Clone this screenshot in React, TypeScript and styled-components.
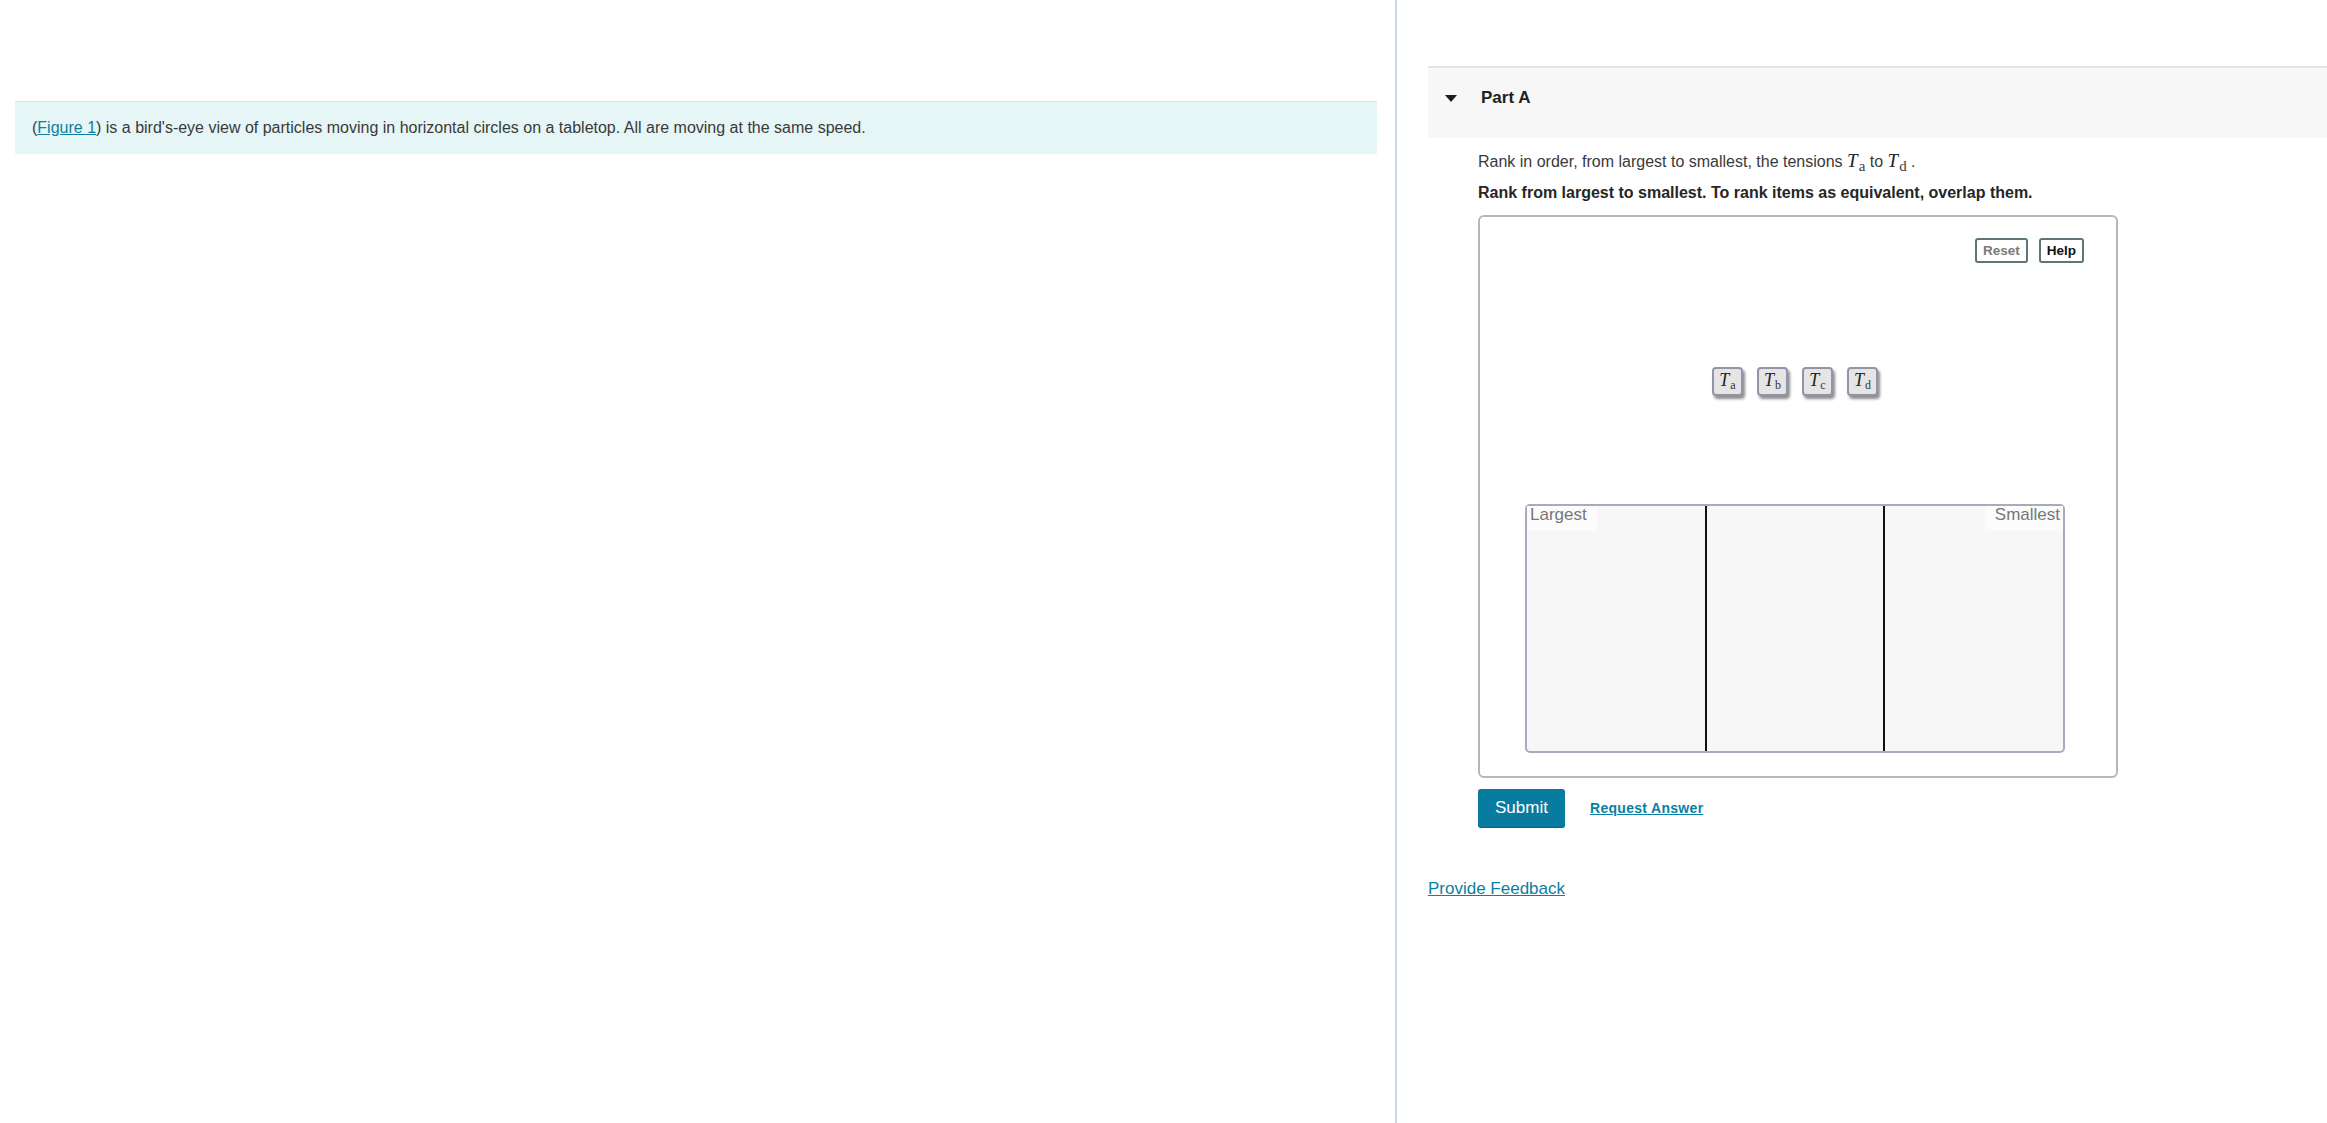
import React from "react";
import styled, { createGlobalStyle } from "styled-components";

const Global = createGlobalStyle`
  html, body { margin: 0; padding: 0; background: #ffffff; }
  body { font-family: "Liberation Sans", Arial, sans-serif; color: #333333; }
`;

const Page = styled.div`
  display: flex;
  width: 2327px;
  min-height: 1123px;
`;

const LeftPane = styled.div`
  flex: none;
  width: 1395px;
  box-sizing: border-box;
  padding: 101px 18px 0 15px;
`;

const Banner = styled.div`
  height: 53px;
  box-sizing: border-box;
  border-top: 1px solid #d9e3e4;
  background: #e6f5f6;
  display: flex;
  align-items: center;
  padding-left: 17px;
  font-size: 16px;
  color: #3a3a3a;
`;

const Link = styled.a<{ $size?: number; $bold?: boolean }>`
  color: #0a7fa3;
  text-decoration: underline;
  font-size: ${(p) => p.$size ?? 16}px;
  font-weight: ${(p) => (p.$bold ? 700 : 400)};
  cursor: pointer;
`;

const Divider = styled.div`
  flex: none;
  width: 2px;
  background: #c8d7e6;
`;

const RightPane = styled.div`
  flex: 1;
  padding: 66px 0 0 31px;
  display: flex;
  flex-direction: column;
`;

const PartHeader = styled.div`
  height: 72px;
  box-sizing: border-box;
  border-top: 2px solid #e4e4e4;
  background: #f7f7f7;
  padding: 20px 0 0 17px;
  display: flex;
  align-items: flex-start;
`;

const HeaderRow = styled.div`
  height: 20px;
  display: flex;
  align-items: center;
`;

const Caret = styled.span`
  width: 0;
  height: 0;
  border-left: 6px solid transparent;
  border-right: 6px solid transparent;
  border-top: 7px solid #1e1e1e;
`;

const PartTitle = styled.h2`
  margin: 0 0 0 24px;
  font-size: 17px;
  line-height: 20px;
  font-weight: 700;
  color: #222222;
`;

const PartBody = styled.div`
  padding-left: 50px;
  display: flex;
  flex-direction: column;
  align-items: flex-start;
`;

const Prompt = styled.p`
  margin: 12px 0 0;
  font-size: 16px;
  line-height: 22px;
  color: #3a3a3a;
`;

const Instruction = styled.p`
  margin: 9px 0 0;
  font-size: 16px;
  line-height: 22px;
  font-weight: 700;
  color: #262626;
`;

const MathVar = styled.span<{ $size: number }>`
  font-family: "Liberation Serif", "DejaVu Serif", serif;
  font-style: italic;
  font-size: ${(p) => p.$size}px;
  color: #222;
`;

const MathSub = styled.sub<{ $size: number }>`
  font-family: "Liberation Serif", "DejaVu Serif", serif;
  font-style: normal;
  font-size: ${(p) => p.$size}px;
  vertical-align: -0.25em;
  line-height: 0;
  margin-left: 1px;
`;

const RankBox = styled.div`
  margin-top: 11px;
  width: 640px;
  height: 563px;
  box-sizing: border-box;
  border: 2px solid #b7b7b7;
  border-radius: 6px;
  display: flex;
  flex-direction: column;
`;

const Toolbar = styled.div`
  display: flex;
  justify-content: flex-end;
  gap: 11px;
  padding: 21px 32px 0 0;
`;

const ToolButton = styled.button<{ $muted?: boolean }>`
  height: 25px;
  box-sizing: border-box;
  padding: 0 6px;
  border: 2px solid #5d7479;
  border-radius: 3px;
  background: #ffffff;
  font-family: "Liberation Sans", Arial, sans-serif;
  font-size: 13.5px;
  font-weight: 700;
  color: ${(p) => (p.$muted ? "#7a7a7a" : "#111111")};
`;

const TileRow = styled.div`
  margin-top: 104px;
  display: flex;
  justify-content: center;
  gap: 14px;
  padding-right: 6px;
`;

const Tile = styled.div`
  width: 31px;
  height: 29px;
  box-sizing: border-box;
  border: 2px solid #9394a8;
  border-radius: 4px;
  background: #e5e5e5;
  box-shadow: 2px 3px 3px rgba(0, 0, 0, 0.45);
  display: flex;
  align-items: center;
  justify-content: center;
  line-height: 1;
  padding-bottom: 3px;
`;

const RankArea = styled.div`
  margin: 108px 0 0 45px;
  width: 540px;
  height: 249px;
  box-sizing: border-box;
  border: 2px solid #aaaabd;
  border-radius: 5px;
  background: #f7f7f7;
  display: grid;
  grid-template-columns: 178px 178px 1fr;
`;

const RankColumn = styled.div<{ $first?: boolean; $align: "flex-start" | "flex-end" }>`
  border-left: ${(p) => (p.$first ? "none" : "2px solid #111111")};
  display: flex;
  justify-content: ${(p) => p.$align};
  align-items: flex-start;
`;

const ColumnLabel = styled.span<{ $right?: boolean }>`
  height: 25px;
  padding: ${(p) => (p.$right ? "0 3px 0 10px" : "0 10px 0 3px")};
  background: #fcfcfc;
  font-size: 17px;
  line-height: 17px;
  color: #777777;
`;

const Actions = styled.div`
  margin-top: 11px;
  display: flex;
  align-items: center;
`;

const SubmitButton = styled.button`
  width: 87px;
  height: 38px;
  border: none;
  border-radius: 3px;
  background: #077ca0;
  box-shadow: 0 1px 0 #05607c;
  color: #ffffff;
  font-family: "Liberation Sans", Arial, sans-serif;
  font-size: 17px;
`;

const RequestLink = styled(Link)`
  margin-left: 25px;
  letter-spacing: 0.3px;
`;

const Feedback = styled.div`
  margin-top: 52px;
  line-height: 20px;
`;

function T({ sub, size, subSize }: { sub: string; size: number; subSize: number }) {
  return (
    <span>
      <MathVar $size={size}>T</MathVar>
      <MathSub $size={subSize}>{sub}</MathSub>
    </span>
  );
}

export default function App() {
  return (
    <>
      <Global />
      <Page>
        <LeftPane>
          <Banner>
            <span>
              (<Link>Figure 1</Link>) is a bird's-eye view of particles moving in horizontal circles on a
              tabletop. All are moving at the same speed.
            </span>
          </Banner>
        </LeftPane>
        <Divider />
        <RightPane>
          <PartHeader>
            <HeaderRow>
              <Caret />
              <PartTitle>Part A</PartTitle>
            </HeaderRow>
          </PartHeader>
          <PartBody>
            <Prompt>
              Rank in order, from largest to smallest, the tensions <T sub="a" size={19} subSize={15} /> to{" "}
              <T sub="d" size={19} subSize={15} /> .
            </Prompt>
            <Instruction>Rank from largest to smallest. To rank items as equivalent, overlap them.</Instruction>
            <RankBox>
              <Toolbar>
                <ToolButton $muted>Reset</ToolButton>
                <ToolButton>Help</ToolButton>
              </Toolbar>
              <TileRow>
                {["a", "b", "c", "d"].map((s) => (
                  <Tile key={s}>
                    <T sub={s} size={18} subSize={12} />
                  </Tile>
                ))}
              </TileRow>
              <RankArea>
                <RankColumn $first $align="flex-start">
                  <ColumnLabel>Largest</ColumnLabel>
                </RankColumn>
                <RankColumn $align="flex-start" />
                <RankColumn $align="flex-end">
                  <ColumnLabel $right>Smallest</ColumnLabel>
                </RankColumn>
              </RankArea>
            </RankBox>
            <Actions>
              <SubmitButton>Submit</SubmitButton>
              <RequestLink $size={14} $bold>
                Request Answer
              </RequestLink>
            </Actions>
          </PartBody>
          <Feedback>
            <Link $size={17}>Provide Feedback</Link>
          </Feedback>
        </RightPane>
      </Page>
    </>
  );
}
